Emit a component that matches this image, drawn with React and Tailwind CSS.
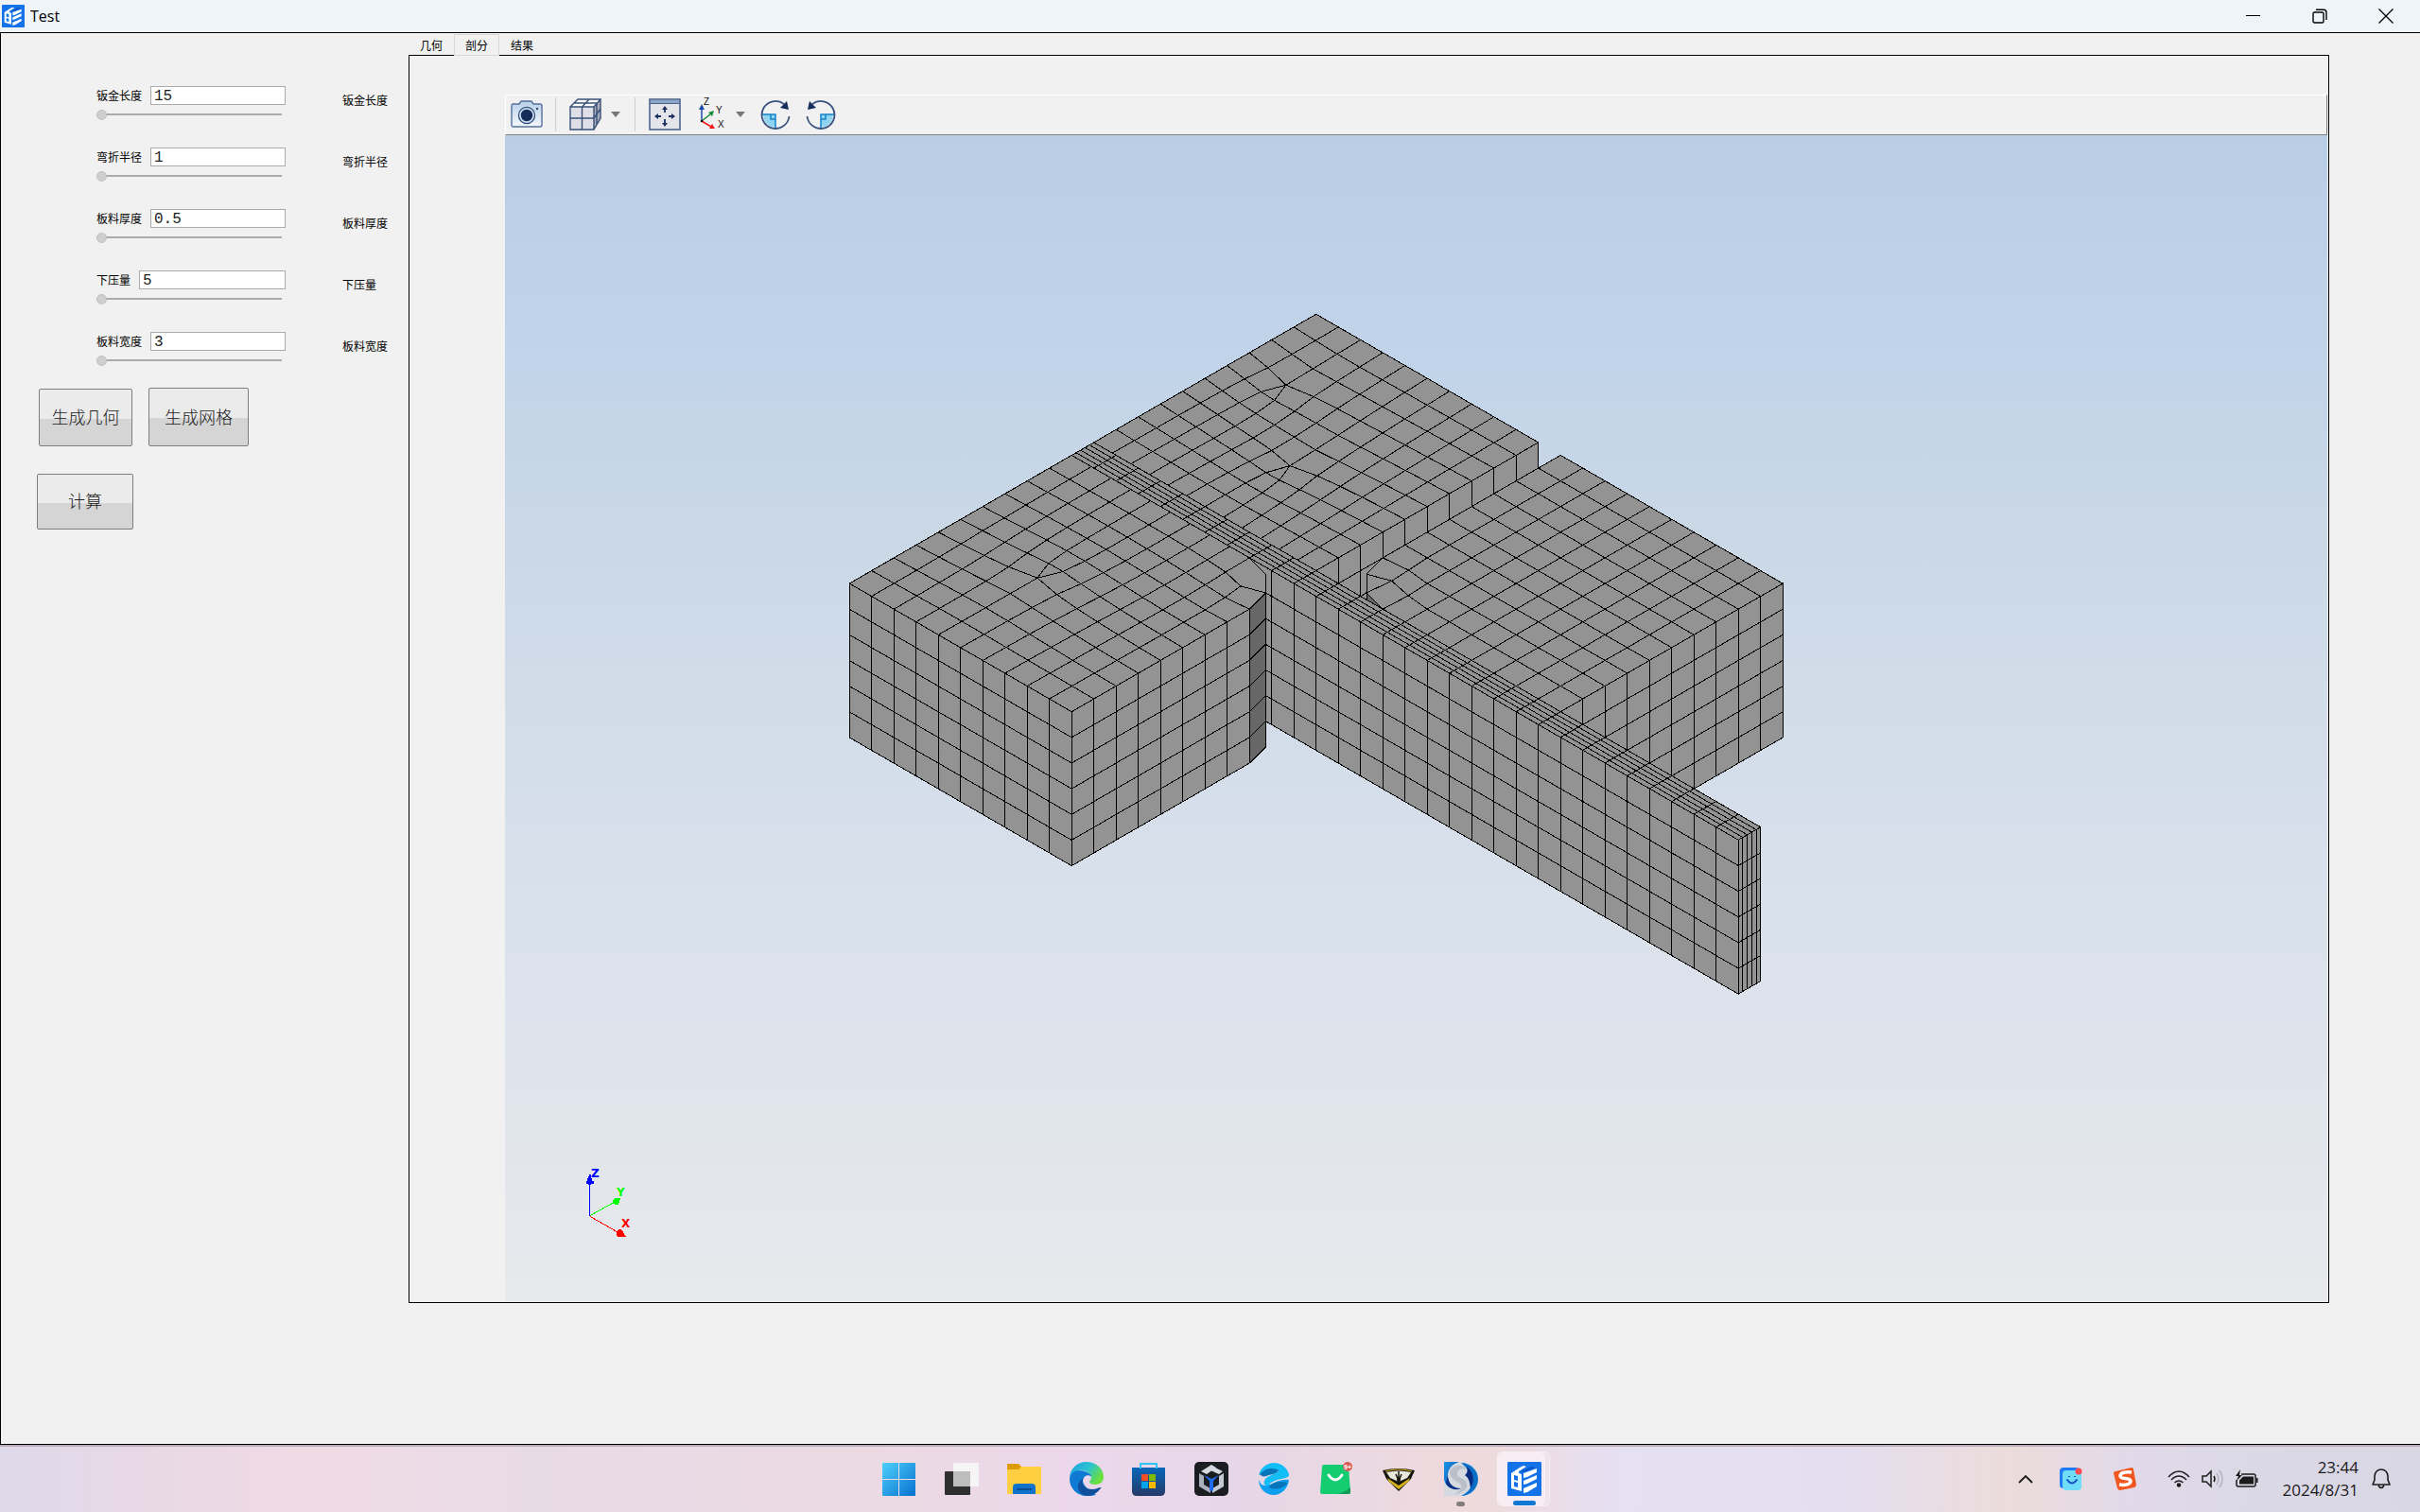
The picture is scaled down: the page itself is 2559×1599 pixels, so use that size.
import { useState } from "react";

const FIELDS = [
  { id: "length", label: "钣金长度", value: "15" },
  { id: "radius", label: "弯折半径", value: "1" },
  { id: "thickness", label: "板料厚度", value: "0.5" },
  { id: "press", label: "下压量", value: "5" },
  { id: "width", label: "板料宽度", value: "3" },
];

const TABS = ["几何", "剖分", "结果"];

/* -------------------------
 * Mesh geometry
 * u runs to the lower right, v to the lower left, w downwards
 * ------------------------- */
const ORIGIN = { x: 1391.7, y: 332.3 };
const LAYERS = 6;

const project = ([u, v, w = 0]) => [
  ORIGIN.x + 23.5 * (u - v),
  ORIGIN.y + 13.56 * (u + v) + 27.15 * w,
];

const toPath = (points, closed) =>
  points
    .map(project)
    .map(([x, y], i) => `${i ? "L" : "M"}${x.toFixed(1)} ${y.toFixed(1)}`)
    .join("") + (closed ? "Z" : "");

const range = (from, to) =>
  Array.from({ length: to - from + 1 }, (_, i) => from + i);

// spread n + 1 nodes evenly between two values
const spread = (from, to, n) =>
  range(0, n).map((i) => from + ((to - from) * i) / n);

// extrude a polyline of top nodes down to the bottom of the block
const wall = (nodes) => {
  const lines = nodes.map(([u, v]) => [
    [u, v, 0],
    [u, v, LAYERS],
  ]);
  range(0, LAYERS).forEach((w) =>
    lines.push(nodes.map(([u, v]) => [u, v, w]))
  );
  const outline = [
    ...nodes.map(([u, v]) => [u, v, 0]),
    ...[...nodes].reverse().map(([u, v]) => [u, v, LAYERS]),
  ];
  return { outline, lines };
};

// join two node rows; at "split" one node of the short row feeds two nodes
const joinRows = (short, long, split) => {
  const lines = [];
  short.forEach((p, i) => {
    if (split === undefined || i <= split) lines.push([p, long[i]]);
    if (split !== undefined && i >= split) lines.push([p, long[i + 1]]);
  });
  return lines;
};

// move every free node to the middle of its neighbours, in place
const relax = (lines, fixed, rounds = 60) => {
  const near = new Map();
  const link = (a, b) => {
    if (!near.has(a)) near.set(a, new Set());
    near.get(a).add(b);
  };
  lines.forEach((line) => {
    for (let i = 1; i < line.length; i++) {
      link(line[i - 1], line[i]);
      link(line[i], line[i - 1]);
    }
  });
  for (let r = 0; r < rounds; r++) {
    near.forEach((others, p) => {
      if (fixed.has(p)) return;
      let u = 0;
      let v = 0;
      others.forEach((q) => {
        u += q[0];
        v += q[1];
      });
      p[0] = u / others.size;
      p[1] = v / others.size;
    });
  }
};

// punch block behind the sheet
const buildPunch = () => {
  const rows = range(0, 10).map((v) => {
    const n = v < 4 ? 10 : v < 7 ? 11 : 12;
    return spread(0, 10, n).map((u) => [u, v]);
  });
  const lines = [...rows];
  for (let i = 0; i < 10; i++) {
    const split = i === 3 ? 2 : i === 6 ? 6 : undefined;
    lines.push(...joinRows(rows[i], rows[i + 1], split));
  }
  const fixed = new Set([...rows[0], ...rows[10]]);
  rows.forEach((row) => fixed.add(row[0]).add(row[row.length - 1]));
  relax(lines, fixed);
  return { outline: [[0, 0], [10, 0], [10, 10], [0, 10]], lines };
};

// die block on the right, rounded where it meets the sheet
const buildRightDie = () => {
  const p1 = [11.27, 9];
  const p2 = [12, 9.73];
  const node = (u, v) => {
    if (u === 11 && v === 9) return p1;
    if (u === 12 && v === 10) return p2;
    if (u === 12 && v === 9) return [12.1, 8.7];
    if (u === 13 && v === 9) return [13.05, 8.9];
    if (u === 12 && v === 8) return [12.06, 7.9];
    return [u, v];
  };
  const lines = [[p1, p2]];
  range(0, 9).forEach((v) => lines.push(range(11, 21).map((u) => node(u, v))));
  lines.push(range(12, 21).map((u) => node(u, 10)));
  lines.push(range(0, 9).map((v) => node(11, v)));
  range(12, 21).forEach((u) => lines.push(range(0, 10).map((v) => node(u, v))));
  return {
    outline: [[11, 0], [21, 0], [21, 10], [13, 10], p2, p1, [11, 8]],
    lines,
  };
};

// die block on the left
const buildLeftDie = () => {
  const p1 = [9, 11.27];
  const p2 = [9.73, 12];
  const q = [8.9, 12.3];
  const rows = range(12, 21).map((v) => {
    const n = v < 17 ? 11 : 10;
    return spread(0, 10, n).map((u, i) => {
      if (v === 12 && i === n) return p2;
      if (v === 12 && i === n - 1) return q;
      return [u, v];
    });
  });
  const edge = spread(0, 8, 9).map((u) => [u, 11]);
  const lines = [edge, ...rows, ...joinRows(edge, rows[0])];
  for (let i = 0; i < 9; i++) {
    if (i === 4) lines.push(...joinRows(rows[5], rows[4], 4));
    else lines.push(...joinRows(rows[i], rows[i + 1]));
  }
  const fixed = new Set([...edge, ...rows[9], q]);
  rows.forEach((row) => fixed.add(row[0]).add(row[row.length - 1]));
  relax(lines, fixed);
  lines.push([edge[9], p1, p2, [10, 13]]);
  return {
    outline: [[0, 11], [8, 11], p1, p2, [10, 13], [10, 21], [0, 21]],
    lines,
  };
};

// thin sheet clamped between the blocks, five elements thick
const buildSheetTop = () => ({
  outline: [[0, 10], [30, 10], [30, 11], [0, 11]],
  lines: [
    ...spread(10, 11, 5).map((v) => [[0, v], [30, v]]),
    ...range(0, 30).map((u) => [[u, 10], [u, 11]]),
  ],
});

// painted back to front
const FACES = [
  buildPunch(),
  wall(range(0, 10).map((v) => [10, 10 - v])),
  { ...wall([[12, 9.73], [13, 10]]), dark: true },
  buildRightDie(),
  wall(range(0, 10).map((v) => [21, 10 - v])),
  { outline: [[12, 9.73], [13, 10], [12.29, 10]], lines: [], dark: true },
  buildSheetTop(),
  wall(range(8, 30).map((u) => [u, 11])),
  wall(spread(10, 11, 5).map((v) => [30, v])),
  buildLeftDie(),
  wall(range(0, 10).map((u) => [u, 21])),
  wall(range(13, 21).map((v) => [10, v])),
  { ...wall([[9.73, 12], [10, 13]]), dark: true },
];

function MeshView() {
  return (
    <svg
      viewBox="534 143 1927 1233"
      className="block w-full h-full"
      role="img"
      aria-label="mesh"
    >
      <g stroke="#000" strokeWidth="1" shapeRendering="crispEdges">
        {FACES.map((face, i) => (
          <g key={i}>
            <path
              d={toPath(face.outline, true)}
              fill={face.dark ? "#676767" : "#939393"}
            />
            <path d={face.lines.map((l) => toPath(l)).join("")} fill="none" />
          </g>
        ))}
      </g>

      {/* Axis triad */}
      <g shapeRendering="crispEdges">
        <path d="M623.5 1285.5V1250" stroke="#00f" />
        <path d="M623 1242h2v4h1v3h2v3h-3v1h-3v-1h-2v-3h1v-3h1z" fill="#00f" />
        <path d="M624 1285.5l27-15" stroke="#0f0" />
        <path d="M656 1267l-6 0-2 2v4l3 1h3l1-3z" fill="#0f0" />
        <path d="M624 1286.5l30 17" stroke="#f00" />
        <path d="M662 1308l-3-5-3-3h-2l-2 4v3l2 1z" fill="#f00" />
      </g>
      <g fontFamily="DejaVu Sans" fontWeight="bold" fontSize="12">
        <text x="625" y="1245" fill="#00f">Z</text>
        <text x="652" y="1265" fill="#0f0">Y</text>
        <text x="657" y="1298" fill="#f00">X</text>
      </g>
    </svg>
  );
}

/* -------------------------
 * Icons
 * ------------------------- */
function AppIcon({ className }) {
  return (
    <svg viewBox="0 0 36 36" className={className}>
      <rect width="36" height="36" rx="1" fill="#1473e9" />
      <path d="M4 12l9-6 4-2 3 1-8 5v2l3 1v18L4 28z" fill="#fff" />
      <path d="M7 14l4 1v5l-4-1zM7 21l4 1v5l-4-1z" fill="#1473e9" />
      <path d="M17 12l14-5v4l-10 5-4 1zM17 20l14-6v4l-10 5-4 1zM17 28l14-6v4l-10 6-4 1z" fill="#fff" />
      <path d="M14 10l12-5 4 1-13 5z" fill="#0b57c4" />
    </svg>
  );
}

function CameraIcon() {
  return (
    <svg viewBox="0 0 34 30" className="w-[34px] h-[30px]">
      <defs>
        <linearGradient id="cam" x1="0" y1="0" x2="0" y2="1">
          <stop offset="0" stopColor="#b9d0e8" />
          <stop offset="1" stopColor="#f2f7fc" />
        </linearGradient>
      </defs>
      <path d="M2 4h7l2-3h11l2 3h7q2 0 2 2v20q0 2-2 2H3q-2 0-2-2V6q0-2 1-2z" fill="url(#cam)" stroke="#54719c" strokeWidth="1.4" />
      <circle cx="17" cy="16" r="8.6" fill="#c9dcef" stroke="#2c4876" strokeWidth="1.2" />
      <circle cx="17" cy="16" r="6.2" fill="#152c5b" />
      <circle cx="28" cy="9" r="1.2" fill="#2c4876" />
    </svg>
  );
}

function CubeIcon() {
  return (
    <svg viewBox="0 0 34 34" className="w-[34px] h-[34px]">
      <path d="M1 9L9 1h24v20l-7 12H1z" fill="#dfe0e7" />
      <path d="M1 9L9 1h24l-7 8z" fill="#fff" />
      <path d="M26 9l7-8v20l-7 12z" fill="#a9adbb" />
      <path d="M1 9h25v24H1zM1 9l8-8h24l-7 8M33 1v20l-7 12M1 21h25l7-10M13.5 33V9L21 1M5 5h24v22" fill="none" stroke="#3a5079" strokeWidth="1.4" />
    </svg>
  );
}

function FitIcon() {
  return (
    <svg viewBox="0 0 34 34" className="w-[34px] h-[34px]">
      <rect x="1" y="1" width="32" height="32" fill="#e4e5ea" stroke="#4c648c" strokeWidth="1.6" />
      <rect x="2" y="2" width="30" height="3" fill="#8da6c8" />
      <path d="M1 5.5h32" stroke="#4c648c" />
      <path d="M17 10v5M17 22v5M8 19h5M21 19h5" stroke="#1b2f60" strokeWidth="1.8" />
      <path d="M17 8l3 4h-6zM17 30l3-4h-6zM6 19l4-3v6zM28 19l-4-3v6z" fill="#1b2f60" />
    </svg>
  );
}

function AxesIcon() {
  return (
    <svg viewBox="0 0 30 36" className="w-[30px] h-9">
      <path d="M4 25V12" stroke="#1d4aa8" strokeWidth="1.5" />
      <path d="M4 7l3 6H1z" fill="#1d4aa8" />
      <path d="M4 25l9-7" stroke="#168a3c" strokeWidth="1.5" />
      <path d="M17 14l-2 6-4-4z" fill="#168a3c" />
      <path d="M4 25l10 6" stroke="#f01818" strokeWidth="1.5" />
      <path d="M18 33l-6 0 3-5z" fill="#f01818" />
      <circle cx="4" cy="25" r="1.2" />
      <g fontFamily="Liberation Sans" fontSize="10" fill="#111">
        <text x="6" y="8">Z</text>
        <text x="19" y="17">Y</text>
        <text x="21" y="32">X</text>
      </g>
    </svg>
  );
}

function RotateIcon({ flip }) {
  return (
    <svg viewBox="0 0 32 32" className={flip ? "w-8 h-8 -scale-x-100" : "w-8 h-8"}>
      <path d="M3 16h13v14Q4 28 3 16z" fill="#8fd4f0" />
      <path d="M2 16h14v14M11 16v5h5" fill="none" stroke="#1682c8" strokeWidth="1.5" />
      <path d="M30.5 18A14.5 14.5 0 1 1 25 5" fill="none" stroke="#3a5380" strokeWidth="1.8" />
      <path d="M30 11l-9-2 7-7z" fill="#152c5b" />
    </svg>
  );
}

function DropArrow() {
  return (
    <svg viewBox="0 0 10 6" className="w-[10px] h-[6px]">
      <path d="M0 0h10L5 6z" fill="#777" />
    </svg>
  );
}

function StartIcon() {
  return (
    <svg viewBox="0 0 36 36" className="w-9 h-9">
      <defs>
        <linearGradient id="win" x1="0" y1="0" x2="1" y2="1">
          <stop offset="0" stopColor="#4fd0fb" />
          <stop offset="1" stopColor="#0670cf" />
        </linearGradient>
      </defs>
      <path d="M0 2q0-1 1-1h16v17H0zM18 1h16q1 0 1 1v16H18zM0 19h17v17H1q-1 0-1-1zM18 19h17v16q0 1-1 1H18z" fill="url(#win)" />
    </svg>
  );
}

function TaskViewIcon() {
  return (
    <svg viewBox="0 0 36 36" className="w-9 h-9">
      <rect x="0" y="10" width="27" height="25" rx="1" fill="#2f2f2f" />
      <rect x="9" y="1" width="27" height="25" rx="1" fill="#f6f4f5" />
      <rect x="9" y="10" width="18" height="16" fill="#bdbdbd" />
    </svg>
  );
}

function FolderIcon() {
  return (
    <svg viewBox="0 0 36 36" className="w-9 h-9">
      <path d="M0 3q0-1 1-1h11l4 4v6H0z" fill="#dd9c05" />
      <path d="M0 8h12l3-3h20q1 0 1 1v27q0 1-1 1H1q-1 0-1-1z" fill="#ffcf42" />
      <path d="M6 34V27q0-4 4-4h16q4 0 4 4v7z" fill="#0f73cc" />
      <path d="M11 29h14" stroke="#0a4f92" strokeWidth="2" strokeLinecap="round" />
    </svg>
  );
}

function EdgeIcon() {
  return (
    <svg viewBox="0 0 36 36" className="w-9 h-9">
      <defs>
        <linearGradient id="edge" x1="0" y1="0" x2="1" y2=".5">
          <stop offset="0" stopColor="#1e9fe0" />
          <stop offset=".55" stopColor="#2cc3d2" />
          <stop offset="1" stopColor="#6be03c" />
        </linearGradient>
      </defs>
      <path d="M0 18C0 7 8 0 18 0s18 7 18 16c0 6-5 8-9 8-4 0-6-1-6-3 0-1 2-2 2-5-1-5-8-8-13-7-6 1-9 5-10 9z" fill="url(#edge)" />
      <path d="M0 18C1 12 5 9 10 9c6 0 13 3 13 7-2-3-8-2-9 3 0 8 9 11 14 16-4 1-7 1-10 1C8 36 0 28 0 18z" fill="#0e7ad3" />
      <path d="M14 19c-2 5 3 10 10 10 4 0 7-2 9-2 1 0 0 1-1 2-3 4-8 7-14 7-8-1-11-9-8-14 1-2 3-4 5-5z" fill="#104f9c" />
    </svg>
  );
}

function StoreIcon() {
  return (
    <svg viewBox="0 0 36 36" className="w-9 h-9">
      <defs>
        <linearGradient id="store" x1="0" y1="0" x2="0" y2="1">
          <stop offset="0" stopColor="#0867ba" />
          <stop offset="1" stopColor="#253a68" />
        </linearGradient>
      </defs>
      <path d="M0 6h35v25q0 5-5 5H5q-5 0-5-5z" fill="url(#store)" />
      <path d="M9 7V2h17v5" fill="none" stroke="#30c4f2" strokeWidth="2" />
      <path d="M10 13h7v7h-7z" fill="#f25022" />
      <path d="M18 13h7v7h-7z" fill="#7fba00" />
      <path d="M10 21h7v7h-7z" fill="#00a4ef" />
      <path d="M18 21h7v7h-7z" fill="#ffb900" />
    </svg>
  );
}

function HexIcon() {
  return (
    <svg viewBox="0 0 36 36" className="w-9 h-9">
      <rect width="36" height="36" rx="5" fill="#1b1d20" />
      <path d="M7 10l11-7 5 3-10 7zM20 5l10 5-4 3-9-4z" fill="#d5dae2" />
      <path d="M5 12l5 3v9l7 4v5L5 26z" fill="#aab1bd" />
      <path d="M31 12l-5 3v9l-7 4v5l12-7z" fill="#c4cad4" />
      <path d="M10 14l8 4 8-4-6 6v10l-2 1-2-1V20z" fill="#1d6cf2" />
    </svg>
  );
}

function BrowserIcon() {
  return (
    <svg viewBox="0 0 36 36" className="w-9 h-9">
      <path d="M2 14C4 6 11 1 18 1c8 0 14 5 16 12 1 5-8 4-15 7-5 2-8 5-6 8C7 25 6 21 10 17c5-4 11-4 13-8-7-2-15 0-21 5z" fill="#13bdf6" />
      <path d="M2 19c2 5 5 7 9 6 7-2 12-7 23-6-1 9-8 16-16 16C9 35 2 28 2 19z" fill="#0ea0ee" />
      <path d="M3 13C9 6 18 6 23 9c-2 4-8 4-13 6-3 1-5 0-7-2z" fill="#0874ba" />
      <path d="M33 22c-5 7-15 8-20 5 1-3 5-5 10-6 4 0 7 0 10 1z" fill="#0874ba" />
    </svg>
  );
}

function MallIcon() {
  return (
    <svg viewBox="0 0 36 36" className="w-9 h-9">
      <path d="M3 5q0-2 2-2h24q2 0 2 2l2 27q0 2-2 2H3q-2 0-2-2z" fill="#14cd70" />
      <path d="M33 27l0 5q0 2-2 2H18q8-1 15-7z" fill="#0f9c56" />
      <path d="M10 14q7 10 14 0" fill="none" stroke="#fff" strokeWidth="3" strokeLinecap="round" />
      <circle cx="30" cy="5" r="5" fill="#dc5a5a" />
      <text x="26" y="8" fontSize="7" fontWeight="bold" fontFamily="Liberation Sans" fill="#fff">9+</text>
    </svg>
  );
}

function BadgeIcon() {
  return (
    <svg viewBox="0 0 36 36" className="w-9 h-9">
      <path d="M1 9q17-4 34 0l-4 9-13 13L5 18z" fill="#151408" />
      <path d="M5 11q13-3 26 0l-4 6-9 4-9-4z" fill="#e9e7dc" />
      <path d="M6 17l12 8 12-8-2 4-10 8-10-8z" fill="#d9b31a" />
      <path d="M4 10q14-4 28 0" stroke="#d9b31a" fill="none" />
      <path d="M15 13l3 7 3-7M18 10v12" stroke="#151408" strokeWidth="1.5" fill="none" />
      <circle cx="18" cy="19" r="2" fill="#151408" />
    </svg>
  );
}

function SwirlIcon() {
  return (
    <svg viewBox="0 0 36 36" className="w-9 h-9">
      <defs>
        <linearGradient id="swirl" x1="0" y1="0" x2="1" y2="1">
          <stop offset="0" stopColor="#1c93e6" />
          <stop offset="1" stopColor="#0a4fae" />
        </linearGradient>
      </defs>
      <path d="M0 0h18q18 1 18 18t-18 18H0z" fill="#d5dae1" />
      <path d="M0 0h16C7 3 3 9 4 17c1 6 4 9 9 11-7 1-12-3-13-10z" fill="url(#swirl)" />
      <path d="M4 14c0 8 5 14 14 14-6 3-14 0-16-6z" fill="#0b2f86" />
      <path d="M18 1c10 0 18 8 18 17 0 10-8 18-18 18 8-4 12-9 11-17 0-6-5-13-11-18z" fill="#0c6fc7" />
      <path d="M24 5c7 5 9 14 4 23-1-8-2-11-6-14 3-2 3-5 2-9z" fill="#0a2a80" />
      <path d="M6 10C10 2 20 2 24 8c-6-2-10 0-10 5 0 4 8 4 10 9 2 6-4 11-14 13 6-3 9-7 8-10-2-5-12-5-12-15z" fill="#b9c0c9" />
    </svg>
  );
}

const APPS = [
  { name: "Start", Icon: StartIcon },
  { name: "Task View", Icon: TaskViewIcon },
  { name: "Explorer", Icon: FolderIcon },
  { name: "Edge", Icon: EdgeIcon },
  { name: "Store", Icon: StoreIcon },
  { name: "Cube", Icon: HexIcon },
  { name: "Browser", Icon: BrowserIcon },
  { name: "Mall", Icon: MallIcon },
  { name: "Badge", Icon: BadgeIcon },
  { name: "Swirl", Icon: SwirlIcon, running: true },
];

function TitleBar() {
  return (
    <header className="flex items-center h-[34px] pl-0.5 pr-7 bg-[#eff4f9]">
      <AppIcon className="w-6 h-6" />
      <h1 className="ml-[6px] text-base font-['Open_Sans',sans-serif]">Test</h1>
      <div className="ml-auto flex gap-[54px]">
        <button aria-label="Minimize">
          <svg viewBox="0 0 16 16" className="w-4 h-4">
            <path d="M0 7.5h15" stroke="#000" />
          </svg>
        </button>
        <button aria-label="Restore">
          <svg viewBox="0 0 16 16" className="w-4 h-4" fill="none" stroke="#000" strokeWidth="1.4">
            <rect x="1" y="4" width="11" height="11" rx="1.5" />
            <path d="M4 1.2h8q3 0 3 3V12" />
          </svg>
        </button>
        <button aria-label="Close">
          <svg viewBox="0 0 16 16" className="w-4 h-4">
            <path d="M.5.5l15 15M15.5.5l-15 15" stroke="#000" strokeWidth="1.3" />
          </svg>
        </button>
      </div>
    </header>
  );
}

function ParamForm() {
  const [values, setValues] = useState(
    Object.fromEntries(FIELDS.map((f) => [f.id, f.value]))
  );

  const buttonClass =
    "pb-[3px] rounded-[2px] border border-[#7d7d7d] bg-[linear-gradient(#ebebeb_52%,#d5d5d5_52%)] text-lg font-light text-[#222]";

  return (
    <aside className="w-[431px] shrink-0 pt-14 font-['Noto_Sans_CJK_SC',sans-serif]">
      <div className="flex flex-col gap-[29px] pl-[101px]">
        {FIELDS.map((f) => (
          <div key={f.id} className="flex gap-[60px] h-9 text-xs">
            <div className="w-[200px]">
              <div className="flex items-center gap-[9px] h-5">
                <label htmlFor={f.id}>{f.label}</label>
                <input
                  id={f.id}
                  type="text"
                  value={values[f.id]}
                  onChange={(e) =>
                    setValues({ ...values, [f.id]: e.target.value })
                  }
                  className="flex-1 min-w-0 h-5 px-[3px] pt-[2px] border border-[#ababab] bg-white text-base leading-none text-[#222] font-['Liberation_Mono',monospace]"
                />
              </div>
              <input
                type="range"
                aria-label={f.label}
                defaultValue={0}
                className="block mt-1 w-[196px] h-3 appearance-none bg-[linear-gradient(#ababab,#ababab)] bg-[length:100%_2px] bg-center bg-no-repeat [&::-webkit-slider-thumb]:appearance-none [&::-webkit-slider-thumb]:w-[11px] [&::-webkit-slider-thumb]:h-[11px] [&::-webkit-slider-thumb]:rounded-full [&::-webkit-slider-thumb]:bg-[#cfcfcf] [&::-webkit-slider-thumb]:border [&::-webkit-slider-thumb]:border-[#c0c0c0]"
              />
            </div>
            <span className="mt-[7px] leading-4">{f.label}</span>
          </div>
        ))}
      </div>

      <div className="mt-[23px] pl-10 flex items-end gap-[17px]">
        <button className={`${buttonClass} w-[99px] h-[61px]`}>生成几何</button>
        <button className={`${buttonClass} w-[106px] h-[62px]`}>生成网格</button>
      </div>
      <button className={`${buttonClass} mt-[29px] ml-[38px] w-[102px] h-[59px]`}>
        计算
      </button>
    </aside>
  );
}

function Toolbar() {
  return (
    <div className="flex items-center h-[43px] pl-[5px] pb-[2px] border border-t-white border-l-white border-r-[#808080] border-b-[#808080]">
      <button aria-label="Snapshot"><CameraIcon /></button>
      <span className="ml-[13px] w-px h-9 bg-[#cfcfcf]" />
      <button aria-label="View" className="ml-[14px]"><CubeIcon /></button>
      <button aria-label="View menu" className="ml-[10px]"><DropArrow /></button>
      <span className="ml-[15px] w-px h-9 bg-[#cfcfcf]" />
      <button aria-label="Fit" className="ml-[14px]"><FitIcon /></button>
      <button aria-label="Axes" className="ml-[18px]"><AxesIcon /></button>
      <button aria-label="Axes menu" className="ml-[10px]"><DropArrow /></button>
      <button aria-label="Rotate right" className="ml-4"><RotateIcon /></button>
      <button aria-label="Rotate left" className="ml-4"><RotateIcon flip /></button>
    </div>
  );
}

function Workspace() {
  const [active, setActive] = useState(1);

  return (
    <main className="flex-1 min-w-0 flex flex-col mr-24 mb-[149px]">
      <div role="tablist" className="relative flex h-6 -mb-px pt-px font-['Noto_Sans_CJK_SC',sans-serif] text-xs">
        {TABS.map((tab, i) => (
          <button
            key={tab}
            role="tab"
            aria-selected={i === active}
            onClick={() => setActive(i)}
            className={`w-12 ${
              i === active ? "bg-[#f1f1f1] border border-[#d9d9d9]" : ""
            }`}
          >
            {tab}
          </button>
        ))}
      </div>
      <section className="flex-1 min-h-0 flex flex-col pt-[41px] pl-[101px] pr-px pb-px border border-black">
        <Toolbar />
        <div className="flex-1 min-h-0 bg-[linear-gradient(#b9cde5,#c2d4e9_20%,#cad8e6_34%,#d4deea_55%,#dde3ec_75%,#e7e9ec)]">
          <MeshView />
        </div>
      </section>
    </main>
  );
}

function Tray() {
  return (
    <div className="flex items-center justify-end pr-[31px]">
      <button aria-label="Hidden icons" className="mr-7">
        <svg viewBox="0 0 16 10" className="w-4 h-[10px]">
          <path d="M1 9l7-7 7 7" fill="none" stroke="#1b1b1b" strokeWidth="1.8" />
        </svg>
      </button>
      <svg viewBox="0 0 24 24" className="w-6 h-6 mr-[33px]">
        <rect x="0" y="0" width="21" height="22" rx="4" fill="#1f7bf5" />
        <rect x="3" y="3" width="20" height="21" rx="4" fill="#6fdcf8" />
        <path d="M8 13q5 7 10 0" fill="none" stroke="#1450c8" strokeWidth="2" strokeLinecap="round" />
        <path d="M10 9v1M16 9v1" stroke="#1450c8" strokeWidth="2" />
        <circle cx="20" cy="4" r="3.5" fill="#fb4a4e" />
      </svg>
      <svg viewBox="0 0 24 24" className="w-6 h-6 mr-[33px]">
        <path d="M2 4L19 0q2 0 2 2l3 16q0 2-2 3L7 24q-2 0-3-2L0 6q0-2 2-2z" fill="#f1561f" />
        <path d="M19 5Q7 4 7 9c0 4 10 1 11 5 0 4-6 5-12 4" fill="none" stroke="#fff" strokeWidth="3.5" />
      </svg>
      <div className="flex items-center gap-3 mr-[25px]">
        <svg viewBox="0 0 24 18" className="w-6 h-[18px]" fill="none" stroke="#1b1b1b" strokeWidth="1.5">
          <path d="M1 7q11-12 22 0M4 10q8-8 16 0M7.500 13q4.500-4 9 0" />
          <circle cx="12" cy="15.500" r="1.500" fill="#1b1b1b" />
        </svg>
        <svg viewBox="0 0 24 20" className="w-6 h-5" fill="none" stroke="#1b1b1b" strokeWidth="1.5">
          <path d="M1 7h4l5-5v16l-5-5H1z" />
          <path d="M13 7q2 3 0 6" />
          <path d="M16 4q4 6 0 12M19 1q6 9 0 18" stroke="#b5b2be" />
        </svg>
        <svg viewBox="0 0 24 20" className="w-6 h-5">
          <path d="M6 5h13q2 0 2 2v9q0 2-2 2H3q-2 0-2-2v-5" fill="none" stroke="#1b1b1b" strokeWidth="1.5" />
          <path d="M8 7.5h11v8H4v-4zM22 9h1.5v5H22z" fill="#1b1b1b" />
          <path d="M5 0L0 7h3l-2 5 6-6H4z" fill="#1b1b1b" />
        </svg>
      </div>
      <time className="text-right text-[17px] leading-6 font-['Open_Sans',sans-serif] text-[#1b1b1b]">
        23:44
        <br />
        2024/8/31
      </time>
      <button aria-label="Notifications" className="ml-[14px]">
        <svg viewBox="0 0 20 22" className="w-5 h-[22px]" fill="none" stroke="#1b1b1b" strokeWidth="1.6" strokeLinejoin="round">
          <path d="M1 17l2-5V8q1-7 7-7t7 7v4l2 5zM7 18q3 5 6 0" />
        </svg>
      </button>
    </div>
  );
}

function Taskbar() {
  return (
    <footer className="grid grid-cols-[1fr_auto_1fr] h-[71px] pb-[2px] border-t-2 border-[#b8adb8] bg-[linear-gradient(90deg,#dfdaea,#e8d8e6_6%,#f0dbe4_13%,#e8dbe8_22%,#ecdae2_35%,#ecd8ea_44%,#e6d7e8_51%,#efdadc_61%,#e6e0f3_67%,#e4def0_76%,#ecdcdb_83%,#e2d9e9_88%,#dcd9e7_92%,#dad7e5)]">
      <span />
      <nav className="flex items-center gap-[10px] pl-[2px]">
        {APPS.map(({ name, Icon, running }) => (
          <button
            key={name}
            aria-label={name}
            className="relative flex items-center justify-center w-14 h-[58px]"
          >
            <Icon />
            {running && (
              <span className="absolute bottom-0 w-[9px] h-[5px] rounded-full bg-[#857c80]" />
            )}
          </button>
        ))}
        <button
          aria-label="Test"
          className="w-14 h-[58px] pr-[6px] rounded-md border border-white/40 bg-white/20"
        >
          <span className="relative flex items-center justify-center w-[50px] h-full pl-[6px] rounded-md bg-[#f8edf3]">
            <AppIcon className="w-9 h-9" />
            <span className="absolute bottom-0 w-6 h-[5px] rounded-full bg-[#0f78d4]" />
          </span>
        </button>
      </nav>
      <Tray />
    </footer>
  );
}

export default function App() {
  return (
    <div className="flex flex-col h-screen bg-[#f1f1f1] text-black">
      <TitleBar />
      <div className="flex-1 min-h-0 flex border-l border-y border-black">
        <ParamForm />
        <Workspace />
      </div>
      <Taskbar />
    </div>
  );
}
